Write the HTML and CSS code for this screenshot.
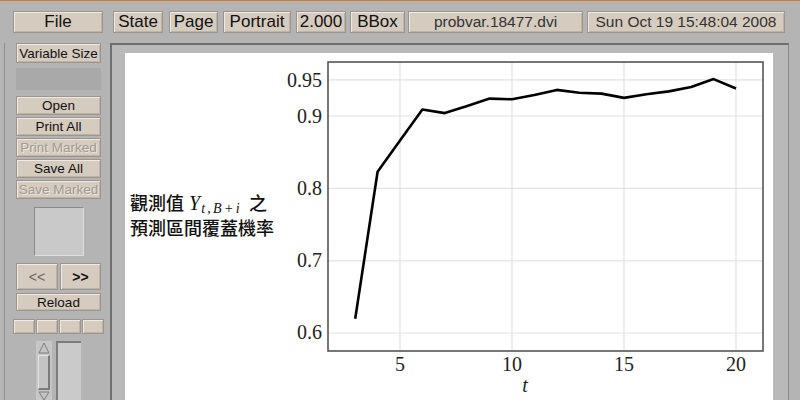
FILE: index.html
```html
<!DOCTYPE html>
<html>
<head>
<meta charset="utf-8">
<link rel="stylesheet" href="styles.css">
</head>
<body>
<div class="app">
  <div class="topbar">
    <div class="btn big w-file">File</div>
    <div class="btn big w-state">State</div>
    <div class="btn big w-page">Page</div>
    <div class="btn big w-portrait">Portrait</div>
    <div class="btn big w-zoom">2.000</div>
    <div class="btn big w-bbox">BBox</div>
    <div class="btn info w-fname">probvar.18477.dvi</div>
    <div class="btn info w-date">Sun Oct 19 15:48:04 2008</div>
  </div>
  <div class="main">
    <aside class="side">
      <div class="btn small w-full varsize">Variable Size</div>
      <div class="pagelist"></div>
      <div class="cmds">
        <div class="btn small w-full">Open</div>
        <div class="btn small w-full">Print All</div>
        <div class="btn small w-full disabled">Print Marked</div>
        <div class="btn small w-full">Save All</div>
        <div class="btn small w-full disabled">Save Marked</div>
      </div>
      <div class="magbox"></div>
      <div class="nav">
        <div class="btn nav-btn prev">&lt;&lt;</div>
        <div class="btn nav-btn next">&gt;&gt;</div>
      </div>
      <div class="btn small w-full reload">Reload</div>
      <div class="tiny-row">
        <div class="btn tiny"></div>
        <div class="btn tiny"></div>
        <div class="btn tiny"></div>
        <div class="btn tiny"></div>
      </div>
      <div class="bottom-row">
        <div class="scroll">
          <svg class="arrow" width="16" height="14" viewBox="0 0 16 14"><path d="M8 2 L13 12 L3 12 Z" fill="#c4c4c4" stroke="#7c7c7c" stroke-width="1"/></svg>
          <div class="thumb"></div>
          <svg class="arrow" width="16" height="10" viewBox="0 0 16 10"><path d="M3 2 L13 2 L8 10 Z" fill="#c4c4c4" stroke="#7c7c7c" stroke-width="1"/></svg>
        </div>
        <div class="listbox"></div>
      </div>
    </aside>
    <div class="view">
      <div class="page">
        <svg class="plot" width="648" height="347" viewBox="125 53 648 347">
          <g stroke="#e2e2e2" stroke-width="1.2">
            <line x1="328" y1="79.8" x2="763" y2="79.8"/>
            <line x1="328" y1="116" x2="763" y2="116"/>
            <line x1="328" y1="188.4" x2="763" y2="188.4"/>
            <line x1="328" y1="260.8" x2="763" y2="260.8"/>
            <line x1="328" y1="333" x2="763" y2="333"/>
            <line x1="400" y1="62" x2="400" y2="351"/>
            <line x1="512" y1="62" x2="512" y2="351"/>
            <line x1="624" y1="62" x2="624" y2="351"/>
            <line x1="736" y1="62" x2="736" y2="351"/>
          </g>
          <rect x="328" y="62" width="435" height="289" fill="none" stroke="#555" stroke-width="1.6"/>
          <polyline fill="none" stroke="#000" stroke-width="2.6" stroke-linejoin="round"
            points="355.2,318.7 377.6,171.7 400,140.6 422.4,109.5 444.8,113.1 467.2,105.9 489.6,98.6 512,99.3 534.4,95 556.8,89.9 579.2,92.8 601.6,93.6 624,97.9 646.4,94.3 668.8,91.4 691.2,87 713.6,79.1 736,88.5"/>
          <g class="tick" text-anchor="end">
            <text x="322" y="86.5">0.95</text>
            <text x="322" y="122.5">0.9</text>
            <text x="322" y="194.5">0.8</text>
            <text x="322" y="267">0.7</text>
            <text x="322" y="339">0.6</text>
          </g>
          <g class="tick" text-anchor="middle">
            <text x="400" y="371">5</text>
            <text x="512" y="371">10</text>
            <text x="624" y="371">15</text>
            <text x="736" y="371">20</text>
          </g>
          <text class="tick ital" x="525" y="392" text-anchor="middle">t</text>
          <text class="cjk" x="130" y="210">觀測值<tspan class="math" x="189">Y</tspan><tspan class="sub" dx="1" dy="3">t,B+i</tspan><tspan x="249" dy="-3">之</tspan><tspan x="130" dy="25">預測區間覆蓋機率</tspan></text>
        </svg>
      </div>
    </div>
  </div>
</div>
</body>
</html>
```

FILE: styles.css
```css
* { box-sizing: border-box; }
html, body { margin: 0; padding: 0; }
body {
  width: 800px;
  height: 400px;
  overflow: hidden;
  background: #b4b4b4;
  font-family: "Liberation Sans", Arial, sans-serif;
}
.app {
  width: 800px;
  height: 400px;
  border-top: 1px solid #cc7d36;
  display: flex;
  flex-direction: column;
}
.topbar {
  height: 42px;
  padding: 10px 0 0 13px;
  display: flex;
  align-items: flex-start;
  flex: none;
}
.btn {
  background: #d5cbbf;
  border: 1px solid #9c958d;
  box-shadow: inset 1px 1px 0 #efe9e1, inset -1px -1px 0 #bdb3a7;
  display: flex;
  align-items: center;
  justify-content: center;
  color: #111;
  white-space: nowrap;
  flex: none;
}
.big { height: 22px; font-size: 17px; }
.info { height: 22px; font-size: 15.5px; color: #333; }
.w-file { width: 90px; margin-right: 10px; }
.w-state { width: 50px; margin-right: 6px; }
.w-page { width: 49px; margin-right: 5px; }
.w-portrait { width: 68px; margin-right: 5px; }
.w-zoom { width: 50px; margin-right: 4px; }
.w-bbox { width: 55px; margin-right: 3px; }
.w-fname { width: 175px; margin-right: 4px; }
.w-date { width: 198px; }

.main {
  display: flex;
  flex: 1;
  min-height: 0;
}
.side {
  width: 106px;
  margin-left: 4px;
  border-left: 1px solid #8e8e8e;
  padding-left: 11px;
  display: flex;
  flex-direction: column;
  align-items: flex-start;
  flex: none;
}
.small { height: 19px; font-size: 13.5px; }
.w-full { width: 85px; }
.varsize { height: 20px; }
.pagelist {
  width: 85px;
  height: 23px;
  margin-top: 5px;
  background: #a9a9a9;
}
.cmds {
  margin-top: 6px;
  display: flex;
  flex-direction: column;
  gap: 2px;
}
.disabled {
  color: #a09a94;
  text-shadow: 1px 1px 0 #ece6de;
}
.magbox {
  width: 50px;
  height: 50px;
  margin: 8px 0 0 18px;
  background: #c9c9c9;
  border-top: 1px solid #8a8a8a;
  border-left: 1px solid #8a8a8a;
  border-right: 1px solid #dedede;
  border-bottom: 1px solid #dedede;
}
.nav {
  margin-top: 7px;
  display: flex;
  gap: 2px;
}
.nav-btn { height: 27px; font-size: 14px; }
.prev { width: 42px; color: #666; }
.next { width: 41px; font-weight: bold; color: #111; }
.reload { height: 18px; margin-top: 3px; width: 85px; }
.tiny-row {
  margin: 8px 0 0 -3px;
  display: flex;
  gap: 1.5px;
}
.tiny { width: 21.5px; height: 15px; }
.bottom-row {
  margin: 7px 0 0 20px;
  display: flex;
  gap: 4px;
  flex: 1;
}
.scroll {
  width: 16px;
  background: #c6c6c6;
  display: flex;
  flex-direction: column;
  align-items: center;
}
.arrow { display: block; flex: none; }
.thumb {
  width: 12px;
  height: 35px;
  background: #c4c4c4;
  border-top: 1px solid #e4e4e4;
  border-left: 1px solid #e4e4e4;
  border-right: 2px solid #7a7a7a;
  border-bottom: 2px solid #7a7a7a;
}
.listbox {
  width: 25px;
  background: #cacaca;
  border-top: 2px solid #7c7c7c;
  border-left: 2px solid #7c7c7c;
}

.view {
  width: 679px;
  border-top: 2px solid #6f6f6f;
  border-left: 2px solid #6f6f6f;
  border-right: 1px solid #888;
  padding: 8px 14px 0 13px;
  background: #b9b9b9;
  flex: none;
}
.page {
  width: 648px;
  height: 100%;
  background: #fff;
  overflow: hidden;
}
.plot { display: block; }
.tick {
  font-family: "Liberation Serif", "Times New Roman", serif;
  font-size: 20px;
  fill: #222;
}
.ital { font-style: italic; }
.cjk {
  font-family: "Noto Sans CJK TC", "Noto Sans CJK SC", sans-serif;
  font-size: 18px;
  font-weight: 500;
  fill: #111;
}
.math {
  font-family: "Liberation Serif", serif;
  font-style: italic;
  font-size: 20px;
}
.sub {
  font-family: "Liberation Serif", serif;
  font-style: italic;
  font-size: 14px;
  letter-spacing: 2.3px;
}
```
